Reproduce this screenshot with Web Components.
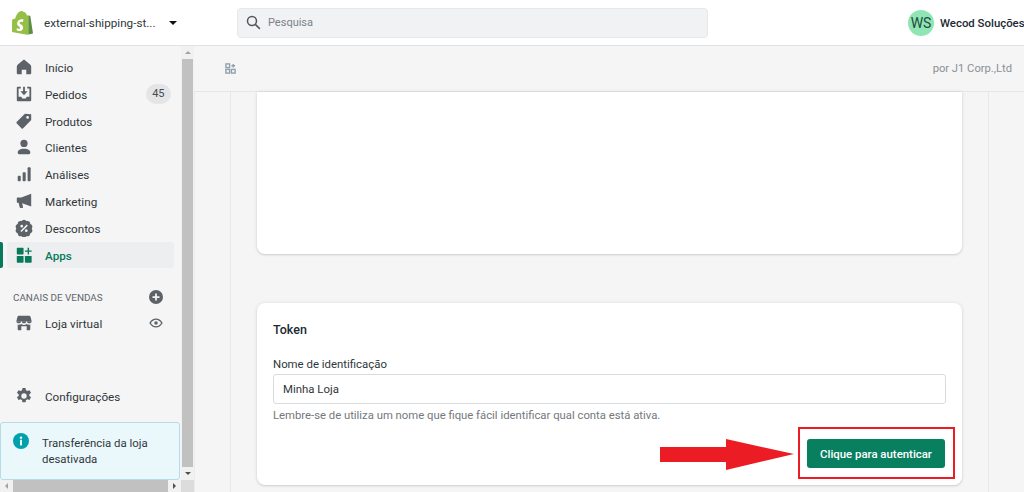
<!DOCTYPE html>
<html lang="pt">
<head>
<meta charset="utf-8">
<title>Token</title>
<style>
  html, body { margin: 0; height: 100%; overflow: hidden; }
  body { font-family: Roboto, "Open Sans", sans-serif; }
</style>
</head>
<body>
<admin-shell>
  <top-bar slot="top"></top-bar>
  <side-nav slot="side"></side-nav>
  <app-view slot="main"></app-view>
</admin-shell>

<script>
// icons used by the sidebar, 20x20 viewbox
const ICONS = {
  home: '<path d="M10 2c-.4 0-.8.2-1.100.4L3.200 7.200C2.500 7.800 2 8.700 2 9.600V17c0 .6.4 1 1 1h4.500v-5h5v5H17c.6 0 1-.4 1-1V9.600c0-.9-.5-1.800-1.200-2.400l-5.700-4.800C10.800 2.200 10.400 2 10 2z"/>',
  orders: '<path fill-rule="evenodd" d="M3 2h3.500v2H4v9h3l1 2h4l1-2h3V4h-2.500V2H17c.6 0 1 .4 1 1v14c0 .6-.4 1-1 1H3c-.6 0-1-.4-1-1V3c0-.6.4-1 1-1zm6 0h2v5h3l-4 4.500L6 7h3V2z"/>',
  tag: '<path fill-rule="evenodd" d="M18 2.500 11 2 1.800 11.200c-.4.4-.4 1 0 1.400l5.600 5.600c.4.400 1 .400 1.400 0L18 9V2.500zM14 7.500a1.500 1.500 0 1 1 0-3 1.500 1.500 0 0 1 0 3z"/>',
  person: '<circle cx="10" cy="6" r="4"/><path d="M10 12c-4 0-7 1.600-7 4 0 1.500 1 2 2.500 2h9c1.500 0 2.500-.5 2.500-2 0-2.400-3-4-7-4z"/>',
  chart: '<rect x="3" y="12" width="3.400" height="6" rx="1"/><rect x="8.500" y="8" width="3.400" height="10" rx="1"/><rect x="14" y="2.500" width="3.400" height="15.500" rx="1"/>',
  megaphone: '<path d="M18 2 7 6H3c-.6 0-1 .4-1 1v4c0 .6.4 1 1 1h1l1.200 5c.1.500.5.800 1 .8H8c.6 0 1-.5.900-1.100L8 12.400 18 16V2z"/>',
  discount: '<path fill-rule="evenodd" d="M8.300 1.500c1-.8 2.400-.8 3.400 0l1 .8 1.300-.1c1.300-.1 2.400.8 2.700 2l.3 1.300 1.100.7c1.100.7 1.500 2.100 1 3.300l-.5 1.200.5 1.200c.5 1.200.1 2.600-1 3.300l-1.100.7-.3 1.300c-.3 1.200-1.400 2.100-2.700 2l-1.300-.1-1 .8c-1 .8-2.400.8-3.400 0l-1-.8-1.300.1c-1.300.1-2.400-.8-2.700-2l-.3-1.300-1.100-.7C.8 14.500.4 13.100.9 11.900l.5-1.200-.5-1.200C.4 8.300.8 6.900 1.900 6.200L3 5.500l.3-1.300c.3-1.200 1.400-2.100 2.700-2l1.300.1 1-.8zM7.500 6.500a1.500 1.500 0 1 0 0 3 1.500 1.500 0 0 0 0-3zm5 5a1.500 1.500 0 1 0 0 3 1.500 1.500 0 0 0 0-3zM13 6.200 6 13.200l1.200 1.200 7-7L13 6.200z"/>',
  apps: '<rect x="2" y="2" width="7.500" height="7.500" rx=".8"/><rect x="2" y="11" width="7.500" height="7.500" rx=".8"/><rect x="11" y="11" width="7.500" height="7.500" rx=".8"/><path d="M14 2h1.600v2.900h2.900v1.600h-2.900v3h-1.600v-3h-3V4.900h3z"/>',
  store: '<path d="M4.500 2h11c.9 0 1.600.5 1.800 1.300L18.500 8H1.500l1.200-4.700C2.900 2.500 3.600 2 4.500 2z"/><path d="M1.500 8h5.300c0 1.500-1.200 2.400-2.700 2.400S1.500 9.500 1.500 8zM7.400 8h5.200c0 1.500-1.100 2.400-2.600 2.400S7.400 9.500 7.400 8zM13.200 8h5.300c0 1.500-1.100 2.400-2.600 2.400S13.200 9.500 13.200 8z"/><path d="M3 11.800c1.500.4 3 .2 4-.6.9.7 2 1 3 1s2.100-.3 3-1c1 .8 2.500 1 4 .6V17c0 .6-.4 1-1 1h-3v-4.500H7V18H4c-.6 0-1-.4-1-1v-5.200z"/>',
  gear: '<path d="M8.300 1h3.400l.5 2.600c.5.200 1 .5 1.400.8l2.500-.9 1.700 3-2 1.700a6 6 0 0 1 0 1.600l2 1.700-1.700 3-2.500-.9c-.4.300-.9.600-1.400.8l-.5 2.600H8.300l-.5-2.600a6 6 0 0 1-1.400-.8l-2.500.9-1.700-3 2-1.700a6 6 0 0 1 0-1.600l-2-1.700 1.700-3 2.500.9c.4-.3.9-.6 1.400-.8L8.300 1zM10 7a3 3 0 1 0 0 6 3 3 0 0 0 0-6z" fill-rule="evenodd"/>'
};

class AdminShell extends HTMLElement {
  constructor() {
    super();
    this.attachShadow({ mode: 'open' });
    this.shadowRoot.innerHTML = `
      <style>
        :host { display: grid; grid-template-rows: 46px 1fr; grid-template-columns: 194px 1fr; width: 1024px; height: 492px; overflow: hidden; background: #f5f5f5; }
      </style>
      <slot name="top"></slot>
      <slot name="side"></slot>
      <slot name="main"></slot>
    `;
  }
}

class TopBar extends HTMLElement {
  constructor() {
    super();
    this.attachShadow({ mode: 'open' });
    this.shadowRoot.innerHTML = `
      <style>
        :host { grid-column: 1 / 3; display: flex; align-items: center; height: 45px; background: #fff; border-bottom: 1px solid #dfe1e3; color: #202a33; font-size: 11.700px; overflow: hidden; white-space: nowrap; }
        .store { display: flex; align-items: center; width: 237px; flex: none; box-sizing: border-box; padding-left: 12px; }
        .store svg.logo { width: 21px; height: 24px; flex: none; }
        .name { margin-left: 11px; width: 125px; color: #30373b; }
        .caret { width: 0; height: 0; border: 4px solid transparent; border-top: 4.500px solid #111; border-bottom: 0; }
        .search { display: flex; align-items: center; width: 471px; height: 30px; flex: none; box-sizing: border-box; padding-left: 8px; background: #f1f2f4; border: 1px solid #e6e8ea; border-radius: 4px; color: #7a8187; font-size: 11px; }
        .search svg { width: 15px; height: 15px; margin-right: 7px; }
        .user { display: flex; align-items: center; margin-left: 200px; font-weight: 500; font-size: 11.400px; }
        .avatar { width: 26px; height: 26px; border-radius: 50%; background: #8fe6b4; color: #234a3c; display: flex; align-items: center; justify-content: center; font-weight: 400; font-size: 14px; margin-right: 6px; }
      </style>
      <div class="store">
        <svg class="logo" viewBox="0 0 21 24">
          <path fill="#95bf47" d="M16.300 4.500 14.800 4.200C14.300 2.800 13.400 1 11.700 1 11.100.3 10.500 0 9.900 0 5.800 0 3.900 5 3.300 7.600L.9 8.300c-.6.200-.7.200-.8.800L0 20.900 15 23.700l1.300-.3V4.500z"/>
          <path fill="#5e8e3e" d="M16.300 4.500V23.400L21 22.400 18.300 5c-.1-.2-.2-.3-.4-.3l-1.600-.2z"/>
          <path fill="#fff" d="M11.500 8.400 10.800 11s-.8-.4-1.800-.3c-1.400.1-1.400 1-1.400 1.200.1 1.200 3.300 1.500 3.500 4.300.1 2.200-1.200 3.800-3.100 3.900-2.300.1-3.500-1.200-3.500-1.200l.5-2s1.200.9 2.200.9c.6 0 .9-.5.800-.9-.1-1.600-2.700-1.500-2.900-4.100-.1-2.200 1.300-4.400 4.500-4.600 1.200-.1 1.900.2 1.900.2z"/>
        </svg>
        <span class="name">external-shipping-st...</span>
        <span class="caret"></span>
      </div>
      <div class="search">
        <svg viewBox="0 0 20 20" fill="none" stroke="#50585e" stroke-width="2"><circle cx="8" cy="8" r="6"/><path d="m12.500 12.500 6 6"/></svg>
        <span>Pesquisa</span>
      </div>
      <div class="user"><span class="avatar">WS</span><span>Wecod Soluções</span></div>
    `;
  }
}

class NavItem extends HTMLElement {
  constructor() {
    super();
    this.attachShadow({ mode: 'open' });
    const icon = this.getAttribute('icon');
    const active = this.hasAttribute('active');
    const badge = this.getAttribute('badge');
    const eye = this.hasAttribute('eye');
    this.shadowRoot.innerHTML = `
      <style>
        :host { display: block; height: 26.800px; position: relative; }
        .row { display: flex; align-items: center; height: 26px; margin: 0 7px; padding-left: 8px; border-radius: 3px; color: #30373b; font-size: 11.700px; background: ${active ? '#eceef0' : 'transparent'}; }
        :host([active]) .row { color: #087a5b; font-weight: 500; }
        .label { padding-top: 2px; }
        svg.ic { width: 18px; height: 18px; fill: ${active ? '#087a5b' : '#5c6268'}; margin-right: 12px; flex: none; }
        .bar { position: absolute; left: 0; top: 0; width: 3px; height: 26px; background: #087a5b; border-radius: 0 2px 2px 0; }
        .badge { margin-left: auto; margin-right: 3px; background: #e4e5e7; border-radius: 10px; padding: 0 6.500px; height: 20px; line-height: 20px; font-size: 11px; color: #444b50; }
        .eye { margin-left: auto; margin-right: 11px; width: 14px; height: 14px; fill: none; stroke: #5c6268; stroke-width: 2; }
      </style>
      ${active ? '<span class="bar"></span>' : ''}
      <div class="row">
        <svg class="ic" viewBox="0 0 20 20">${ICONS[icon]}</svg>
        <span class="label"><slot></slot></span>
        ${badge ? `<span class="badge">${badge}</span>` : ''}
        ${eye ? '<svg class="eye" viewBox="0 0 20 20"><path d="M1.500 10C4 6 7 4.500 10 4.500S16 6 18.500 10C16 14 13 15.500 10 15.500S4 14 1.500 10z"/><circle cx="10" cy="10" r="1.500" fill="#5c6268"/></svg>' : ''}
      </div>
    `;
  }
}

class SideNav extends HTMLElement {
  constructor() {
    super();
    this.attachShadow({ mode: 'open' });
    this.shadowRoot.innerHTML = `
      <style>
        :host { display: grid; grid-template-columns: 181px 13px; grid-template-rows: 1fr 12px; height: 446px; overflow: hidden; background: #f5f5f5; }
        .content { display: flex; flex-direction: column; padding-top: 8px; min-height: 0; }
        .section { display: flex; align-items: center; justify-content: space-between; margin: 17px 0 1px; height: 24px; padding: 0 18px 0 13px; font-size: 9.900px; color: #5f666c; }
        .plus { width: 14px; height: 14px; }
        .spacer { flex: 1; }
        .notice { display: flex; gap: 13px; box-sizing: border-box; height: 58px; margin: 12px 1px 0 0; padding: 12px 8px 0 4px; font-size: 11.400px; line-height: 16px; color: #30373b; background: #eaf8fc; border: 1px solid #b5dde6; border-radius: 3px; }
        .notice svg { width: 16px; height: 16px; flex: none; margin: -2px 0 0 8px; }
        .vbar { background: #f1f1f1; display: flex; flex-direction: column; }
        .up { height: 13px; display: flex; align-items: center; justify-content: center; }
        .thumb { flex: 1; background: #c1c1c1; margin: 0 1px; }
        .tri { width: 0; height: 0; border: 3.500px solid transparent; }
        .hbar { background: #f1f1f1; display: flex; align-items: center; }
        .hthumb { flex: 1; height: 100%; background: #c1c1c1; margin: 0 5px; }
        .corner { background: #dcdcdc; }
      </style>
      <div class="content">
        <nav-item icon="home">Início</nav-item>
        <nav-item icon="orders" badge="45">Pedidos</nav-item>
        <nav-item icon="tag">Produtos</nav-item>
        <nav-item icon="person">Clientes</nav-item>
        <nav-item icon="chart">Análises</nav-item>
        <nav-item icon="megaphone">Marketing</nav-item>
        <nav-item icon="discount">Descontos</nav-item>
        <nav-item icon="apps" active>Apps</nav-item>
        <div class="section">
          <span>CANAIS DE VENDAS</span>
          <svg class="plus" viewBox="0 0 20 20"><circle cx="10" cy="10" r="10" fill="#5c6268"/><path d="M10 5v10M5 10h10" stroke="#f5f5f5" stroke-width="2.500"/></svg>
        </div>
        <nav-item icon="store" eye>Loja virtual</nav-item>
        <div class="spacer"></div>
        <nav-item icon="gear">Configurações</nav-item>
        <div class="notice">
          <svg viewBox="0 0 20 20"><circle cx="10" cy="10" r="10" fill="#00a0ac"/><rect x="8.800" y="8.500" width="2.400" height="7" fill="#fff"/><circle cx="10" cy="5.800" r="1.500" fill="#fff"/></svg>
          <span>Transferência da loja desativada</span>
        </div>
      </div>
      <div class="vbar">
        <div class="up"><span class="tri" style="border-bottom-color:#a3a3a3;border-top:0"></span></div>
        <div class="thumb"></div>
        <div class="up"><span class="tri" style="border-top-color:#505050;border-bottom:0"></span></div>
      </div>
      <div class="hbar">
        <span class="tri" style="border-right-color:#a3a3a3;border-left:0;margin-left:5px"></span>
        <div class="hthumb"></div>
        <span class="tri" style="border-left-color:#505050;border-right:0;margin-right:5px"></span>
      </div>
      <div class="corner"></div>
    `;
  }
}

class InfoCard extends HTMLElement {
  constructor() {
    super();
    this.attachShadow({ mode: 'open' });
    this.shadowRoot.innerHTML = `
      <style>
        :host { display: block; background: #fff; border-radius: 8px; box-shadow: 0 0 4px rgba(23,24,24,.09), 0 1px 2px rgba(0,0,0,.12); box-sizing: border-box; }
      </style>
      <slot></slot>
    `;
  }
}

class TokenForm extends HTMLElement {
  constructor() {
    super();
    this.attachShadow({ mode: 'open' });
    this.shadowRoot.innerHTML = `
      <style>
        :host { display: block; padding: 17px 16px 0; color: #30373b; font-size: 11.400px; }
        h2 { margin: 0; font-size: 12.500px; line-height: 20px; font-weight: 500; color: #202a33; }
        label { display: block; margin-top: 16px; line-height: 17px; }
        .field { display: flex; align-items: center; box-sizing: border-box; height: 30px; margin-top: 1px; padding-left: 9px; border: 1px solid #d8dbe0; border-radius: 3px; }
        .hint { margin-top: 4px; line-height: 16px; color: #73787d; font-size: 11.300px; }
        .foot { display: flex; justify-content: flex-end; margin-top: 3px; }
        .callout { position: relative; display: flex; padding: 10px 8px 9px 7px; margin-right: -9px; border: 2px solid #ec1c24; }
        button { width: 138px; height: 29px; padding: 0; border: 0; border-radius: 3px; background: #087f5f; color: #fff; font: 500 11.400px Roboto, "Open Sans", sans-serif; }
        .arrow { position: absolute; right: 100%; top: 10px; margin-right: 6px; width: 134px; height: 31px; }
      </style>
      <h2>Token</h2>
      <label>Nome de identificação</label>
      <div class="field">Minha Loja</div>
      <div class="hint">Lembre-se de utiliza um nome que fique fácil identificar qual conta está ativa.</div>
      <div class="foot">
        <div class="callout">
          <svg class="arrow" viewBox="0 0 134 31"><path fill="#ec1c24" d="M0 8h66V0l68 15-68 16v-8H0z"/></svg>
          <button type="button">Clique para autenticar</button>
        </div>
      </div>
    `;
  }
}

class AppView extends HTMLElement {
  constructor() {
    super();
    this.attachShadow({ mode: 'open' });
    this.shadowRoot.innerHTML = `
      <style>
        :host { display: flex; flex-direction: column; height: 446px; overflow: hidden; min-width: 0; }
        .head { display: flex; align-items: center; justify-content: space-between; flex: none; box-sizing: border-box; height: 46px; padding: 0 12px 0 31px; background: #f5f5f5; border-bottom: 1px solid #e6e6e6; color: #8a9096; font-size: 11.200px; }
        .head svg { width: 11px; height: 11px; fill: none; stroke: #8fa0ae; stroke-width: 1.500; }
        .body { flex: 1; display: grid; grid-template-columns: 37px 1fr 36px; background: #f5f5f5; min-height: 0; }
        .gutter-l { box-sizing: border-box; border-left: 1px solid #ececec; border-right: 1px solid #e8e8e8; }
        .gutter-r { border-left: 1px solid #e8e8e8; }
        .page { padding: 0 26px; display: flex; flex-direction: column; min-height: 0; }
        .upper { height: 162px; border-radius: 0 0 8px 8px; flex: none; }
        .lower { height: 182px; margin-top: 49px; flex: none; }
      </style>
      <div class="head">
        <svg viewBox="0 0 12 12"><rect x="1" y="1" width="4" height="4"/><rect x="1" y="7" width="4" height="4"/><rect x="7" y="7" width="4" height="4"/><path d="M9 1v4M7 3h4"/></svg>
        <span>por J1 Corp.,Ltd</span>
      </div>
      <div class="body">
        <div class="gutter-l"></div>
        <div class="page">
          <info-card class="upper"></info-card>
          <info-card class="lower"><token-form></token-form></info-card>
        </div>
        <div class="gutter-r"></div>
      </div>
    `;
  }
}

// children first so attributes and slots are ready when parents upgrade
customElements.define('nav-item', NavItem);
customElements.define('info-card', InfoCard);
customElements.define('token-form', TokenForm);
customElements.define('top-bar', TopBar);
customElements.define('side-nav', SideNav);
customElements.define('app-view', AppView);
customElements.define('admin-shell', AdminShell);
</script>
</body>
</html>
